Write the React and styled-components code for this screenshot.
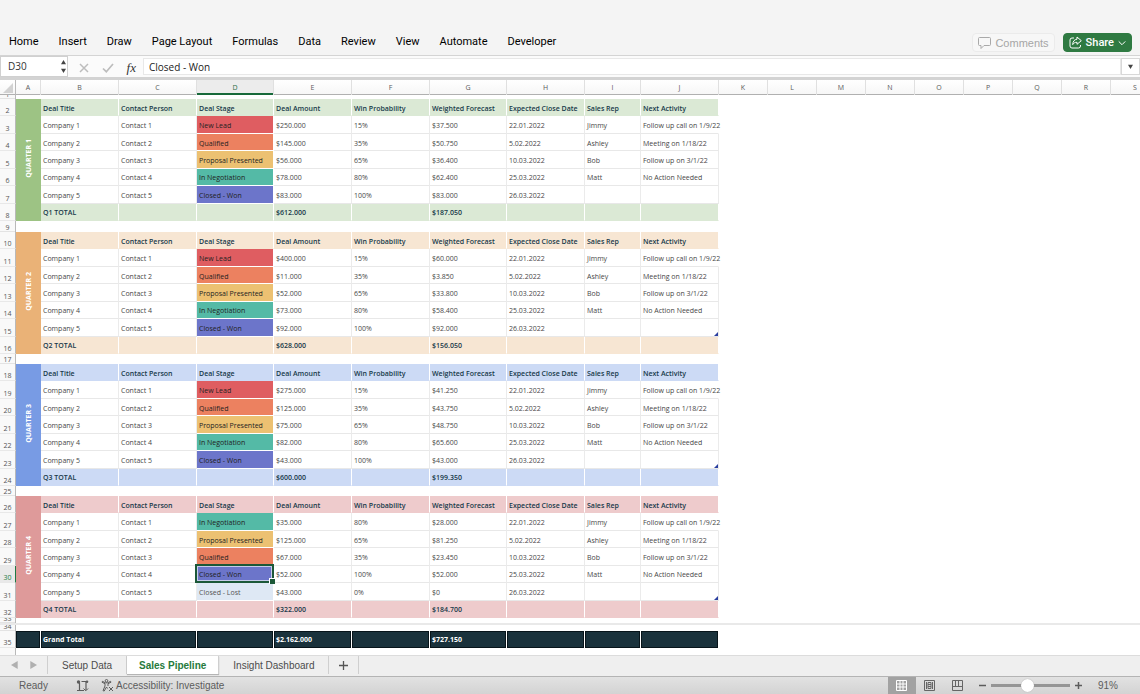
import React from "react";
import styled, { createGlobalStyle, css } from "styled-components";

const GlobalStyle = createGlobalStyle`
  * {
    box-sizing: border-box;
  }
  body {
    margin: 0;
    background: #fff;
    font-family: Roboto, "Liberation Sans", sans-serif;
  }
  button, input {
    font: inherit;
    color: inherit;
    border: 0;
    padding: 0;
    margin: 0;
    background: none;
  }
`;

const Page = styled.div`
  display: flex;
  flex-direction: column;
  min-height: 100vh;
  overflow: hidden;
`;

/* ribbon */
const Ribbon = styled.header`
  display: flex;
  align-items: flex-end;
  justify-content: space-between;
  height: 56px;
  padding: 0 8px 3px 9px;
  background: #f4f4f4;
  border-bottom: 1px solid #d4d4d4;
`;

const Menu = styled.nav`
  display: flex;
  gap: 20px;
  padding-bottom: 2px;
`;

const MenuItem = styled.button`
  font-size: 11px;
  line-height: 16px;
  color: #000;
`;

const Actions = styled.div`
  display: flex;
  gap: 8px;
`;

const ActionButton = styled.button`
  display: flex;
  align-items: center;
  gap: 4px;
  height: 19px;
  padding: 0 5px;
  border-radius: 4px;
  font-family: "Liberation Sans", sans-serif;
  font-size: 11px;
  color: #a6a6a6;
  border: 1px solid #ebebeb;
  background: #f7f7f7;
  ${({ $primary }) =>
    $primary &&
    css`
      font-family: Roboto, sans-serif;
      font-weight: 500;
      color: #fff;
      border-color: #2f7a42;
      background: #2f7a42;
    `}
`;

/* formula bar */
const FormulaBar = styled.div`
  display: flex;
  height: 24px;
  background: #fbfbfb;
  border-bottom: 3px solid #d3d3d3;
`;

const NameBox = styled.div`
  display: flex;
  width: 68px;
  background: #fff;
  border: 1px solid #d0d0d0;
`;

const NameInput = styled.input`
  flex: 1;
  min-width: 0;
  padding: 0 0 2px 7px;
  font-family: "Open Sans", sans-serif;
  font-size: 10px;
  color: #333;
`;

const Stepper = styled.div`
  display: flex;
  flex-direction: column;
  justify-content: space-evenly;
  width: 8px;
`;

const StepButton = styled.button`
  display: flex;
  justify-content: center;
`;

const FormulaTools = styled.div`
  display: flex;
  align-items: center;
  justify-content: space-between;
  width: 75px;
  padding: 2px 7px 0 11px;
`;

const ToolButton = styled.button`
  display: flex;
`;

const FxButton = styled.button`
  font-family: "Liberation Serif", serif;
  font-style: italic;
  font-size: 13px;
  line-height: 16px;
  color: #333;
`;

const FormulaInput = styled.input`
  flex: 1;
  min-width: 0;
  margin: 2px 0;
  padding-left: 5px;
  font-family: "Open Sans", sans-serif;
  font-size: 10px;
  color: #222;
  background: #fff;
  border: 1px solid #e8e8e8;
`;

const ExpandButton = styled.button`
  display: flex;
  align-items: center;
  justify-content: center;
  width: 19px;
  margin: 2px 0;
  background: #fff;
  border: 1px solid #d8d8d8;
`;

/* sheet */
const Sheet = styled.main`
  flex: 1;
  display: flex;
  flex-direction: column;
  font-family: "Open Sans", sans-serif;
  background: linear-gradient(to right, #f9f9f9 15px, #b9b9b9 15px, #b9b9b9 16px, #fff 16px);
`;

const Letters = styled.div`
  display: flex;
  height: 15px;
  background: linear-gradient(#fff, #f6f6f6);
  box-shadow: inset 0 -1px #b0b0b0;
  overflow: hidden;
`;

const Corner = styled.div`
  display: flex;
  align-items: flex-end;
  justify-content: flex-end;
  flex: none;
  width: 16px;
  padding: 0 2px 2px 0;
  border-right: 1px solid #b9b9b9;
`;

const Letter = styled.div`
  flex: none;
  width: ${({ $width }) => $width}px;
  font-size: 7px;
  line-height: 15px;
  text-align: center;
  color: #5a5a5a;
  border-right: 1px solid #e0e0e0;
  ${({ $active }) =>
    $active &&
    css`
      color: #2a6e46;
      background: #ececec;
      box-shadow: inset 0 -2px #17693a;
    `}
`;

const SpacerRow = styled.div`
  display: flex;
  align-items: flex-end;
  height: ${({ $height }) => $height}px;
  overflow: hidden;
`;

const SpacerNumber = styled.span`
  width: 15px;
  font-size: 7px;
  line-height: 7px;
  text-align: center;
  color: #555;
  border-bottom: 1px solid #e3e3e3;
`;

const Split = styled.div`
  height: 2px;
  background: #e9e9e9;
`;

const Table = styled.table`
  width: 719px;
  height: ${({ $height }) => $height}px;
  table-layout: fixed;
  border-collapse: separate;
  border-spacing: 0;
  font-size: 7px;
  line-height: 10px;
  color: #474747;
`;

const RowNumber = styled.th`
  padding: 0;
  font-weight: 400;
  line-height: 8px;
  vertical-align: bottom;
  text-align: center;
  color: ${({ $active }) => ($active ? "#1f7a45" : "#555")};
  border-right: 1px solid ${({ $active }) => ($active ? "#1f7a45" : "#b9b9b9")};
  border-bottom: 1px solid #e8e8e8;
  background: ${({ $active }) => ($active ? "#e9e9e9" : "#f9f9f9")};
`;

const QuarterCell = styled.th`
  padding: 0;
  color: #fff;
  background: ${({ $color }) => $color};
`;

const QuarterLabel = styled.span`
  display: inline-block;
  writing-mode: vertical-rl;
  transform: rotate(180deg);
  font-size: 7px;
  font-weight: 700;
`;

const Cell = styled.td`
  position: relative;
  padding: 3px 2px 0;
  text-align: left;
  white-space: nowrap;
  border-right: 1px solid ${({ $open }) => ($open ? "transparent" : "#ebebeb")};
  border-bottom: 1px solid #e8e8e8;
`;

const StageCell = styled(Cell)`
  color: ${({ $lost }) => ($lost ? "#555" : "#222")};
  background: ${({ $color }) => $color};
  border-color: #fff;
`;

const BandCell = styled(Cell)`
  font-weight: 600;
  color: #17394a;
  background: ${({ $color }) => $color};
  border-right-color: #fff;
  border-bottom-color: ${({ $color }) => $color};
`;

const GrandCell = styled(Cell)`
  padding-top: 1px;
  font-weight: 700;
  color: #fff;
  background: #1a323c;
  border-color: #fff;
  border-bottom: 0;
  box-shadow: inset 0 0 0 1px #07141a;
`;

const Selection = styled.span`
  position: absolute;
  z-index: 1;
  inset: -2px -1px -1px -2px;
  border: 2px solid #1b5838;
  box-shadow: inset 0 0 0 1px #c6cbe9;
  &::after {
    content: "";
    position: absolute;
    right: -3px;
    bottom: -3px;
    width: 5px;
    height: 5px;
    background: #1b5838;
    border: solid #fff;
    border-width: 1px 0 0 1px;
  }
`;

const TableCorner = styled.span`
  position: absolute;
  right: 0;
  bottom: 0;
  border: 2px solid #2b3f9f;
  border-top-color: transparent;
  border-left-color: transparent;
`;

/* bottom bars */
const SheetTabs = styled.div`
  display: flex;
  height: 21px;
  padding-bottom: 2px;
  background: #efefef;
  border-top: 1px solid #dcdcdc;
  font-family: "Liberation Sans", sans-serif;
  font-size: 10px;
  color: #4c4c4c;
`;

const TabArrows = styled.div`
  display: flex;
  align-items: center;
  gap: 10px;
  width: 48px;
  padding-left: 11px;
  border-right: 1px solid #cfcfcf;
`;

const Tab = styled.button`
  padding: 0 14px;
  border-right: 1px solid #cfcfcf;
  ${({ $active }) =>
    $active &&
    css`
      padding: 0 12px;
      font-weight: 700;
      color: #267a3c;
      background: #fff;
      box-shadow: 0 1px 1px #b5b5b5;
    `}
`;

const AddTab = styled(Tab)`
  display: flex;
  align-items: center;
  padding: 0 10px;
`;

const StatusBar = styled.footer`
  display: flex;
  align-items: stretch;
  justify-content: space-between;
  height: 18px;
  padding: 0 22px 0 19px;
  font-family: "Liberation Sans", sans-serif;
  font-size: 10px;
  color: #5c5c5c;
  background: linear-gradient(#e2e2e2, #d3d3d3);
  border-top: 1px solid #b4b4b4;
`;

const StatusGroup = styled.div`
  display: flex;
  align-items: center;
`;

const StatusText = styled.span`
  width: 57px;
`;

const StatusButton = styled.button`
  display: flex;
  align-items: center;
  gap: 2px;
  margin-right: 12px;
`;

const ViewButton = styled.button`
  display: flex;
  align-items: center;
  justify-content: center;
  width: 28px;
  height: 100%;
  color: ${({ $active }) => ($active ? "#fff" : "#666")};
  background: ${({ $active }) => ($active ? "#a2a2a2" : "none")};
`;

const Zoom = styled.div`
  display: flex;
  align-items: center;
  gap: 5px;
  padding: 0 16px 0 7px;
`;

const Slider = styled.input`
  appearance: none;
  width: 79px;
  height: 13px;
  background: linear-gradient(#959595, #959595) center / 100% 3px no-repeat;
  &::-webkit-slider-thumb {
    appearance: none;
    width: 13px;
    height: 13px;
    border-radius: 50%;
    background: #fff;
    box-shadow: 0 0 1px #999;
  }
`;

const columns = [
  ["A", 25], ["B", 78], ["C", 78], ["D", 77], ["E", 78], ["F", 78], ["G", 77], ["H", 78],
  ["I", 56], ["J", 78], ["K", 49], ["L", 49], ["M", 49], ["N", 49], ["O", 49], ["P", 49],
  ["Q", 49], ["R", 49], ["S", 49],
];

const headings = [
  "Deal Title", "Contact Person", "Deal Stage", "Deal Amount", "Win Probability",
  "Weighted Forecast", "Expected Close Date", "Sales Rep", "Next Activity",
];

const stageColors = {
  "New Lead": "#df5d61",
  "Qualified": "#ec8160",
  "Proposal Presented": "#ecc172",
  "In Negotiation": "#54baa6",
  "Closed - Won": "#6c75ca",
  "Closed - Lost": "#dee8f4",
};

const dates = ["22.01.2022", "5.02.2022", "10.03.2022", "25.03.2022", "26.03.2022"];
const reps = ["Jimmy", "Ashley", "Bob", "Matt", ""];
const activities = [
  "Follow up call on 1/9/22", "Meeting on 1/18/22", "Follow up on 3/1/22", "No Action Needed", "",
];

const quarters = [
  {
    id: 1, first: 2, color: "#9dc384", band: "#dbe9d5", amount: "$612.000", forecast: "$187.050",
    deals: [
      ["New Lead", "$250.000", "15%", "$37.500"],
      ["Qualified", "$145.000", "35%", "$50.750"],
      ["Proposal Presented", "$56.000", "65%", "$36.400"],
      ["In Negotiation", "$78.000", "80%", "$62.400"],
      ["Closed - Won", "$83.000", "100%", "$83.000"],
    ],
  },
  {
    id: 2, first: 10, color: "#eab277", band: "#f7e6d3", amount: "$628.000", forecast: "$156.050",
    deals: [
      ["New Lead", "$400.000", "15%", "$60.000"],
      ["Qualified", "$11.000", "35%", "$3.850"],
      ["Proposal Presented", "$52.000", "65%", "$33.800"],
      ["In Negotiation", "$73.000", "80%", "$58.400"],
      ["Closed - Won", "$92.000", "100%", "$92.000"],
    ],
  },
  {
    id: 3, first: 18, color: "#789be4", band: "#ccdaf5", amount: "$600.000", forecast: "$199.350",
    deals: [
      ["New Lead", "$275.000", "15%", "$41.250"],
      ["Qualified", "$125.000", "35%", "$43.750"],
      ["Proposal Presented", "$75.000", "65%", "$48.750"],
      ["In Negotiation", "$82.000", "80%", "$65.600"],
      ["Closed - Won", "$43.000", "100%", "$43.000"],
    ],
  },
  {
    id: 4, first: 26, color: "#de9a9a", band: "#eecbcc", amount: "$322.000", forecast: "$184.700",
    deals: [
      ["In Negotiation", "$35.000", "80%", "$28.000"],
      ["Proposal Presented", "$125.000", "65%", "$81.250"],
      ["Qualified", "$67.000", "35%", "$23.450"],
      ["Closed - Won", "$52.000", "100%", "$52.000"],
      ["Closed - Lost", "$43.000", "0%", "$0"],
    ],
  },
];

const SELECTED_ROW = 30;

const Columns = () => (
  <colgroup>
    <col width="16" />
    {columns.slice(0, 10).map(([name, width]) => (
      <col key={name} width={width} />
    ))}
  </colgroup>
);

const Spacer = ({ number, height }) => (
  <SpacerRow $height={height}>
    <SpacerNumber>{number}</SpacerNumber>
  </SpacerRow>
);

const Triangle = ({ points, color = "#444", size = 5 }) => (
  <svg width={size} height={size} viewBox="0 0 6 6">
    <polygon points={points} fill={color} />
  </svg>
);

const Quarter = ({ id, first, color, band, amount, forecast, deals }) => (
  <Table $height={122}>
    <Columns />
    <tbody>
      <tr>
        <RowNumber scope="row">{first}</RowNumber>
        <QuarterCell rowSpan={7} $color={color}>
          <QuarterLabel>QUARTER {id}</QuarterLabel>
        </QuarterCell>
        {headings.map((text) => (
          <BandCell as="th" key={text} $color={band}>{text}</BandCell>
        ))}
      </tr>
      {deals.map(([stage, value, probability, weighted], i) => {
        const row = first + 1 + i;
        return (
          <tr key={row}>
            <RowNumber scope="row" $active={row === SELECTED_ROW}>{row}</RowNumber>
            <Cell>Company {i + 1}</Cell>
            <Cell>Contact {i + 1}</Cell>
            <StageCell $color={stageColors[stage]} $lost={stage === "Closed - Lost"}>
              {stage}
              {row === SELECTED_ROW && <Selection />}
            </StageCell>
            <Cell>{value}</Cell>
            <Cell>{probability}</Cell>
            <Cell>{weighted}</Cell>
            <Cell>{dates[i]}</Cell>
            <Cell>{reps[i]}</Cell>
            <Cell $open={i === 0}>
              {activities[i]}
              {i === 4 && id > 1 && <TableCorner />}
            </Cell>
          </tr>
        );
      })}
      <tr>
        <RowNumber scope="row">{first + 6}</RowNumber>
        {[`Q${id} TOTAL`, "", "", amount, "", forecast, "", "", ""].map((text, i) => (
          <BandCell key={i} $color={band}>{text}</BandCell>
        ))}
      </tr>
    </tbody>
  </Table>
);

export default function App() {
  return (
    <Page>
      <GlobalStyle />
      <Ribbon>
        <Menu>
          {["Home", "Insert", "Draw", "Page Layout", "Formulas", "Data", "Review", "View", "Automate", "Developer"].map(
            (item) => (
              <MenuItem key={item}>{item}</MenuItem>
            )
          )}
        </Menu>
        <Actions>
          <ActionButton>
            <svg width="13" height="13" viewBox="0 0 13 13" fill="none" stroke="#a9a9a9">
              <path d="M1.5 1.5h10a1 1 0 0 1 1 1v6a1 1 0 0 1-1 1H6l-3 3v-3H1.500a1 1 0 0 1-1-1v-6a1 1 0 0 1 1-1z" />
            </svg>
            Comments
          </ActionButton>
          <ActionButton $primary>
            <svg width="13" height="13" viewBox="0 0 13 13" fill="none" stroke="#fff" strokeLinejoin="round">
              <path d="M5 2H3a2 2 0 0 0-2 2v6a2 2 0 0 0 2 2h6.500a2 2 0 0 0 2-2V9" />
              <path d="M8 1l4.300 3.700L8 8.300V6.300C5.800 6.300 4.700 7 3.700 8.600 3.800 5.500 5.300 3.500 8 3.200z" />
            </svg>
            Share
            <svg width="8" height="8" viewBox="0 0 8 8" fill="none" stroke="#fff" strokeLinecap="round">
              <path d="M1 2.700L4 5.700 7 2.700" />
            </svg>
          </ActionButton>
        </Actions>
      </Ribbon>

      <FormulaBar>
        <NameBox>
          <NameInput aria-label="Name box" defaultValue="D30" />
          <Stepper>
            <StepButton aria-label="Previous cell"><Triangle points="0,5 3,0 6,5" /></StepButton>
            <StepButton aria-label="Next cell"><Triangle points="0,1 6,1 3,6" /></StepButton>
          </Stepper>
        </NameBox>
        <FormulaTools>
          <ToolButton aria-label="Cancel">
            <svg width="10" height="10" viewBox="0 0 10 10" stroke="#bdbdbd" strokeWidth="1.5">
              <path d="M1 1l8 8M9 1L1 9" />
            </svg>
          </ToolButton>
          <ToolButton aria-label="Enter">
            <svg width="12" height="10" viewBox="0 0 12 10" fill="none" stroke="#bdbdbd" strokeWidth="1.700">
              <path d="M1 5.500L4.300 8.700 11 1" />
            </svg>
          </ToolButton>
          <FxButton aria-label="Insert function">fx</FxButton>
        </FormulaTools>
        <FormulaInput aria-label="Formula" defaultValue="Closed - Won" />
        <ExpandButton aria-label="Expand formula bar"><Triangle points="0,1 6,1 3,6" /></ExpandButton>
      </FormulaBar>

      <Sheet>
        <Letters>
          <Corner>
            <svg width="10" height="10" viewBox="0 0 10 10">
              <polygon points="10,0 10,10 0,10" fill="#d2d2d2" />
            </svg>
          </Corner>
          {columns.map(([name, width]) => (
            <Letter key={name} $width={width} $active={name === "D"}>{name}</Letter>
          ))}
        </Letters>
        <Spacer number={1} height={4} />
        <Quarter {...quarters[0]} />
        <Spacer number={9} height={11} />
        <Quarter {...quarters[1]} />
        <Spacer number={17} height={10} />
        <Quarter {...quarters[2]} />
        <Spacer number={25} height={10} />
        <Quarter {...quarters[3]} />
        <Spacer number={33} height={5} />
        <Split />
        <Spacer number={34} height={6} />
        <Table $height={17}>
          <Columns />
          <tbody>
            <tr>
              <RowNumber scope="row">35</RowNumber>
              <GrandCell />
              {["Grand Total", "", "$2.162.000", "", "$727.150", "", "", ""].map((text, i) => (
                <GrandCell key={i} colSpan={i === 0 ? 2 : 1}>{text}</GrandCell>
              ))}
            </tr>
          </tbody>
        </Table>
      </Sheet>

      <SheetTabs>
        <TabArrows>
          <ToolButton aria-label="Previous sheet"><Triangle size={8} points="5,0 5,6 0,3" color="#b0b0b0" /></ToolButton>
          <ToolButton aria-label="Next sheet"><Triangle size={8} points="1,0 1,6 6,3" color="#b0b0b0" /></ToolButton>
        </TabArrows>
        <Tab>Setup Data</Tab>
        <Tab $active>Sales Pipeline</Tab>
        <Tab>Insight Dashboard</Tab>
        <AddTab aria-label="New sheet">
          <svg width="9" height="9" viewBox="0 0 9 9" stroke="#555" strokeWidth="1.300">
            <path d="M4.500 0v9M0 4.500h9" />
          </svg>
        </AddTab>
      </SheetTabs>

      <StatusBar>
        <StatusGroup>
          <StatusText>Ready</StatusText>
          <StatusButton aria-label="Record macro">
            <svg width="13" height="12" viewBox="0 0 13 12" fill="none" stroke="#5c5c5c">
              <path d="M5.500 1.500H10v8.500M8 10.500H3.500V3M1 10.500h3" strokeWidth="1.200" />
              <path d="M7.500 8.500l2.300 2.300 2.300-2.300" />
              <circle cx="2.500" cy="2" r="1.700" fill="#5c5c5c" stroke="none" />
              <circle cx="11" cy="1.800" r="1.300" fill="#5c5c5c" stroke="none" />
            </svg>
          </StatusButton>
          <StatusButton>
            <svg width="13" height="13" viewBox="0 0 13 13" fill="none" stroke="#5c5c5c" strokeLinejoin="round">
              <circle cx="5.500" cy="1.800" r="1.300" />
              <path d="M1 3.200l3 1.500V7l-2 4.700 1.200.3 2.300-4 1 1.500M10 3.200l-3 1.500V7M1 3.200l.4-.9 3 1.500h2.200l3-1.500.4.9" />
              <path d="M8 8l4 4M12 8l-4 4" />
            </svg>
            Accessibility: Investigate
          </StatusButton>
        </StatusGroup>
        <StatusGroup>
          <ViewButton $active aria-label="Normal view">
            <svg width="11" height="11" viewBox="0 0 11 11" fill="none" stroke="currentColor">
              <path d="M.5.5h10v10H.5zM.5 4h10M.5 7h10M4 .5v10M7 .5v10" />
            </svg>
          </ViewButton>
          <ViewButton aria-label="Page layout view">
            <svg width="11" height="11" viewBox="0 0 11 11" fill="none" stroke="currentColor">
              <path d="M.5.5h10v10H.5zM2.500 2v7M8.500 2v7" />
              <path d="M4 2.500h3v6H4zM4 4.500h3M4 6.500h3" />
            </svg>
          </ViewButton>
          <ViewButton aria-label="Page break view">
            <svg width="11" height="11" viewBox="0 0 11 11" fill="none" stroke="currentColor">
              <path d="M.5.5h10v10H.5zM3.500.5v6M6.500.5v6M.5 6.500h10" />
            </svg>
          </ViewButton>
          <Zoom>
            <ToolButton aria-label="Zoom out">
              <svg width="7" height="7" viewBox="0 0 7 7" stroke="#5c5c5c" strokeWidth="1.500">
                <path d="M0 3.500h7" />
              </svg>
            </ToolButton>
            <Slider type="range" aria-label="Zoom" min="0" max="100" defaultValue="45" />
            <ToolButton aria-label="Zoom in">
              <svg width="7" height="7" viewBox="0 0 7 7" stroke="#5c5c5c" strokeWidth="1.500">
                <path d="M0 3.500h7M3.500 0v7" />
              </svg>
            </ToolButton>
          </Zoom>
          <span>91%</span>
        </StatusGroup>
      </StatusBar>
    </Page>
  );
}
